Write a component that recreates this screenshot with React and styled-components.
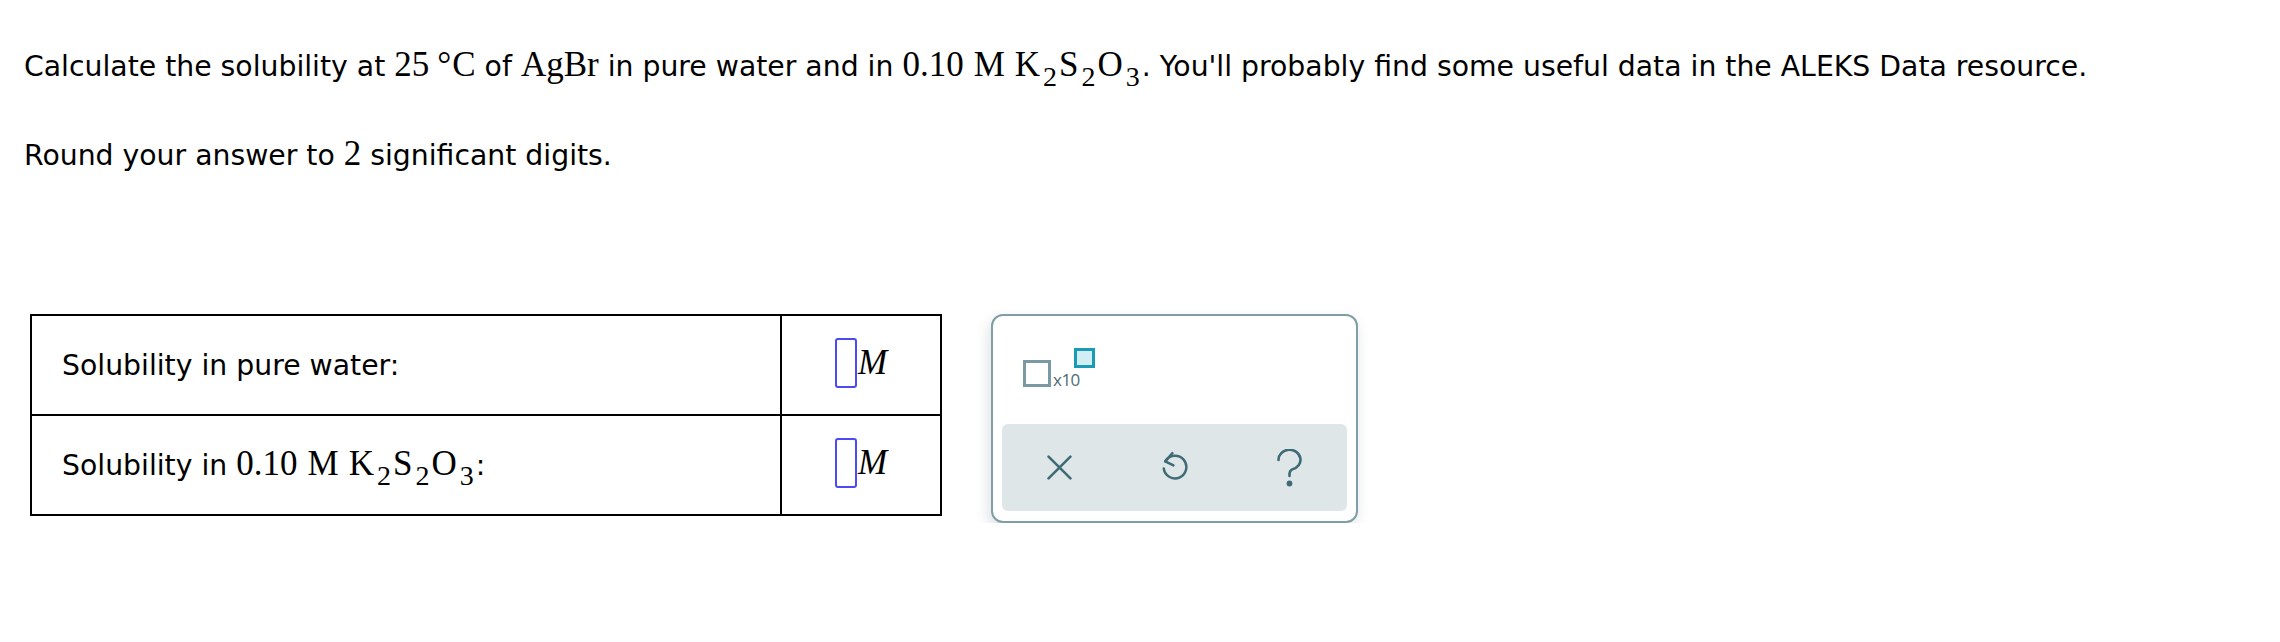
import React from "react";
import styled, { createGlobalStyle } from "styled-components";

const GlobalStyle = createGlobalStyle`
  html, body {
    margin: 0;
    padding: 0;
    background: #fff;
  }
  body {
    font-family: "DejaVu Sans", Verdana, sans-serif;
    color: #000;
  }
`;

const Page = styled.div`
  padding: 47px 24px 0 24px;
`;

const Para = styled.p`
  margin: 0 0 ${(p) => p.$gap || 0}px 0;
  font-size: 28.3px;
  line-height: 40px;
  white-space: nowrap;
`;

const Math = styled.span`
  font-family: "Liberation Serif", "Times New Roman", serif;
  font-size: 35px;
  line-height: 0;
`;

const Space = styled.span`
  display: inline-block;
  width: ${(p) => p.$w}px;
`;

const Sub = styled.sub`
  font-size: 0.8em;
  line-height: 0;
  vertical-align: -0.36em;
  margin: 0 2px 0 3px;
`;

const Work = styled.div`
  display: flex;
  align-items: flex-start;
  gap: 49px;
  margin-top: 138px;
  padding-left: 6px;
`;

const Grid = styled.table`
  border-collapse: collapse;
  border: 2px solid #000;
`;

const Row = styled.tr`
  height: 100px;
`;

const LabelCell = styled.td`
  width: 718px;
  padding: 0 0 0 30px;
  border: 2px solid #000;
  font-size: 28.3px;
  white-space: nowrap;
  vertical-align: middle;
`;

const AnswerCell = styled.td`
  width: 158px;
  padding: 0;
  border: 2px solid #000;
  text-align: center;
  vertical-align: middle;
`;

const Answer = styled.span`
  display: inline-flex;
  align-items: flex-end;
  gap: 1px;
`;

const Blank = styled.span`
  display: inline-block;
  width: 18px;
  height: 46px;
  border: 2px solid #4b4bf5;
  border-radius: 3px;
  margin-bottom: -8px;
`;

const Unit = styled.span`
  font-family: "Liberation Serif", "Times New Roman", serif;
  font-style: italic;
  font-size: 35px;
  line-height: 1;
`;

const Panel = styled.div`
  width: 345px;
  height: 195px;
  border: 2px solid #7f9ea6;
  border-radius: 12px;
  background: #fff;
  box-shadow: -2px 6px 14px rgba(60, 80, 90, 0.18);
  display: flex;
  flex-direction: column;
  justify-content: space-between;
  padding: 0 9px 10px 9px;
  box-sizing: content-box;
`;

const Widget = styled.div`
  display: flex;
  align-items: flex-start;
  padding: 32px 0 0 21px;
  height: 73px;
  box-sizing: border-box;
`;

const Mantissa = styled.span`
  width: 22px;
  height: 21px;
  margin-top: 12px;
  border: 3px solid #7a9aa3;
`;

const Base = styled.span`
  margin-top: 24px;
  margin-left: 2px;
  font-family: "Open Sans", "DejaVu Sans", sans-serif;
  font-size: 17px;
  line-height: 16px;
  color: #4d6b74;
  letter-spacing: -0.5px;
`;

const Exponent = styled.span`
  width: 15px;
  height: 14px;
  margin-left: -6px;
  border: 3px solid #1a9bb5;
  background: #d0eef3;
`;

const Bar = styled.div`
  display: grid;
  grid-template-columns: repeat(3, 1fr);
  align-items: center;
  height: 87px;
  background: #dfe6e8;
  border-radius: 6px;
`;

const Tool = styled.button`
  display: flex;
  align-items: center;
  justify-content: center;
  background: none;
  border: 0;
  padding: 0;
  height: 100%;
  color: #3f6b77;
  cursor: pointer;
`;

const ClearIcon = () => (
  <svg width="25" height="25" viewBox="0 0 24 24" fill="none" stroke="currentColor" strokeWidth="2.5" strokeLinecap="round">
    <path d="M1.5 1.5 L22.5 22.5 M22.5 1.5 L1.5 22.5" />
  </svg>
);

const UndoIcon = () => (
  <svg width="27" height="33" viewBox="0 0 26 32" fill="none" stroke="currentColor" strokeWidth="2.4" strokeLinecap="round" strokeLinejoin="round">
    <path d="M4 10 A11 11 0 1 1 2.6 17" />
    <path d="M11 2 L4 10 L12 14" />
  </svg>
);

const HelpIcon = () => (
  <svg width="27" height="38" viewBox="0 0 27 38" fill="none" stroke="currentColor" strokeWidth="2.6" strokeLinecap="round">
    <path d="M2.5 11 A11 10 0 1 1 16 20.5 Q13.5 22 13.5 25 V27" />
    <circle cx="13.5" cy="34.5" r="1.6" fill="currentColor" />
  </svg>
);

const Thio = () => (
  <Math>
    0.10<Space $w={10} />M<Space $w={10} />K<Sub>2</Sub>S<Sub>2</Sub>O<Sub>3</Sub>
  </Math>
);

export default function App() {
  return (
    <>
      <GlobalStyle />
      <Page>
        <Para $gap={49}>
          Calculate the solubility at <Math>25<Space $w={8} />°<Space $w={1} />C</Math> of <Math>AgBr</Math> in pure water and in <Thio />. You'll probably find some useful data in the ALEKS Data resource.
        </Para>
        <Para>
          Round your answer to <Math>2</Math> significant digits.
        </Para>
        <Work>
          <Grid>
            <tbody>
              <Row>
                <LabelCell>Solubility in pure water:</LabelCell>
                <AnswerCell>
                  <Answer>
                    <Blank />
                    <Unit>M</Unit>
                  </Answer>
                </AnswerCell>
              </Row>
              <Row>
                <LabelCell>
                  Solubility in <Thio />:
                </LabelCell>
                <AnswerCell>
                  <Answer>
                    <Blank />
                    <Unit>M</Unit>
                  </Answer>
                </AnswerCell>
              </Row>
            </tbody>
          </Grid>
          <Panel>
            <Widget>
              <Mantissa />
              <Base>x10</Base>
              <Exponent />
            </Widget>
            <Bar>
              <Tool aria-label="Clear">
                <ClearIcon />
              </Tool>
              <Tool aria-label="Undo">
                <UndoIcon />
              </Tool>
              <Tool aria-label="Help">
                <HelpIcon />
              </Tool>
            </Bar>
          </Panel>
        </Work>
      </Page>
    </>
  );
}
